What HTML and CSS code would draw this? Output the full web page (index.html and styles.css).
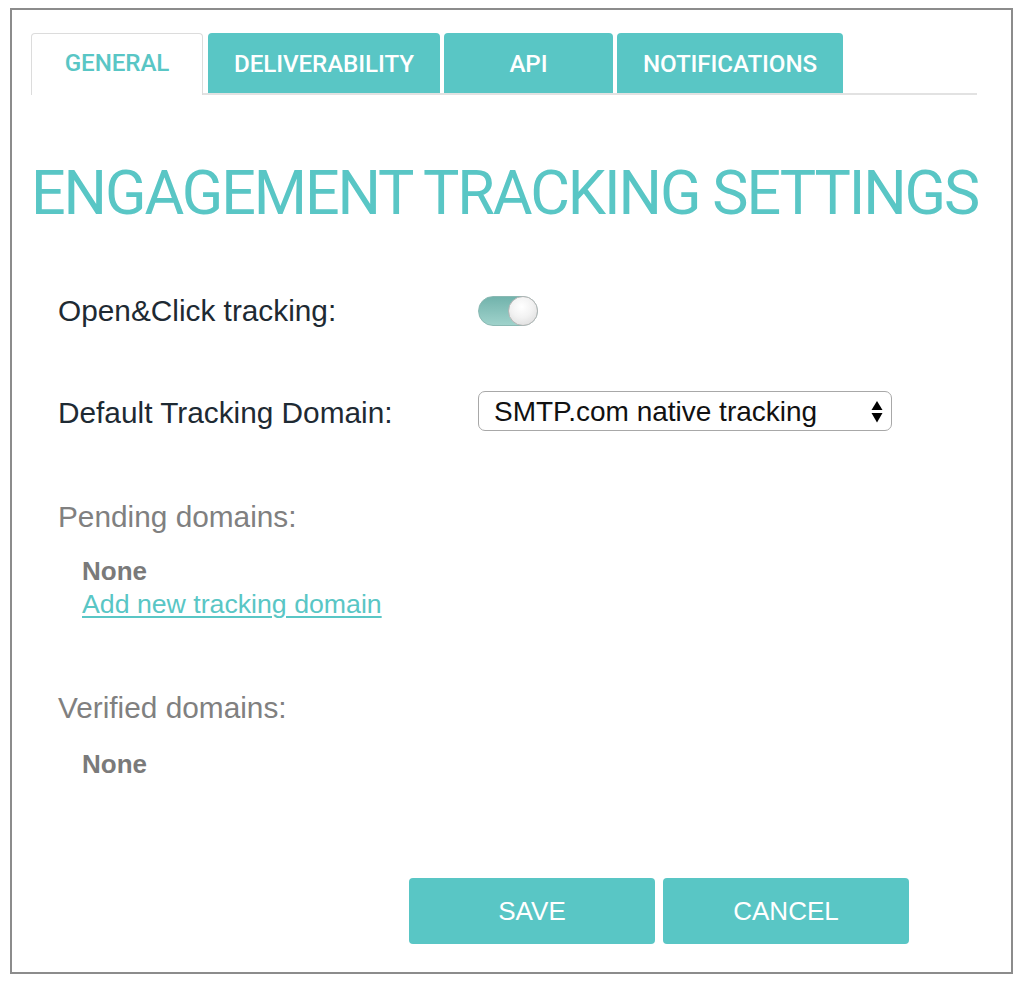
FILE: index.html
```html
<!DOCTYPE html>
<html lang="en">
<head>
<meta charset="utf-8">
<title>Engagement Tracking Settings</title>
<link rel="stylesheet" href="styles.css">
</head>
<body>
<div class="panel">
  <nav class="tabs">
    <a class="tab tab-active" href="#">GENERAL</a>
    <a class="tab" href="#">DELIVERABILITY</a>
    <a class="tab" href="#">API</a>
    <a class="tab" href="#">NOTIFICATIONS</a>
  </nav>

  <h1 class="title">ENGAGEMENT TRACKING SETTINGS</h1>

  <div class="form">
    <div class="row row-toggle">
      <span class="label">Open&amp;Click tracking:</span>
      <span class="toggle"><span class="knob"></span></span>
    </div>
    <div class="row row-select">
      <span class="label">Default Tracking Domain:</span>
      <div class="select-wrap">
        <select class="select">
          <option>SMTP.com native tracking</option>
        </select>
        <svg class="select-arrows" width="12" height="23" viewBox="0 0 12 23">
          <polygon points="6,0 11.5,9 0.5,9" fill="#000"/>
          <polygon points="0.5,12 11.5,12 6,21.5" fill="#000"/>
        </svg>
      </div>
    </div>

    <div class="group group-pending">
      <div class="group-label">Pending domains:</div>
      <div class="group-body">
        <div class="none">None</div>
        <a class="add-link" href="#">Add new tracking domain</a>
      </div>
    </div>

    <div class="group group-verified">
      <div class="group-label">Verified domains:</div>
      <div class="group-body">
        <div class="none none-verified">None</div>
      </div>
    </div>
  </div>

  <div class="actions">
    <button class="btn" type="button">SAVE</button>
    <button class="btn" type="button">CANCEL</button>
  </div>
</div>
</body>
</html>
```

FILE: styles.css
```css
html, body {
  margin: 0;
  padding: 0;
  background: #ffffff;
}

body {
  font-family: "Liberation Sans", Arial, Helvetica, sans-serif;
}

.panel {
  box-sizing: border-box;
  margin: 8px 0 0 10px;
  width: 1003px;
  height: 966px;
  border: 2px solid #8c8c8c;
  padding: 23px 0 0 19px;
  display: flex;
  flex-direction: column;
}

/* Tabs */
.tabs {
  display: flex;
  gap: 4px;
  width: 946px;
  height: 60px;
  border-bottom: 2px solid #e2e2e2;
}

.tab {
  box-sizing: border-box;
  min-width: 169px;
  height: 60px;
  padding: 1px 26px 0;
  display: flex;
  align-items: center;
  justify-content: center;
  background: #59c6c5;
  color: #ffffff;
  font-family: Roboto, "Liberation Sans", sans-serif;
  font-weight: 500;
  font-size: 24.2px;
  letter-spacing: -0.1px;
  text-decoration: none;
  border-radius: 4px 4px 0 0;
}

.tab-active {
  min-width: 172px;
  margin-right: 1px;
  background: #ffffff;
  color: #59c6c5;
  border: 1px solid #dcdcdc;
  border-bottom: none;
  height: 62px;
  margin-bottom: -2px;
  padding: 0 26px 3px;
}

/* Title */
.title {
  margin: 67px 0 0 0;
  font-family: Roboto, "Liberation Sans", sans-serif;
  font-weight: 400;
  font-size: 61px;
  line-height: 62px;
  color: #59c6c5;
  letter-spacing: -2.1px;
  white-space: nowrap;
}

/* Form */
.form {
  display: flex;
  flex-direction: column;
  padding-left: 27px;
}

.row {
  display: flex;
  align-items: center;
}

.row-toggle {
  margin-top: 71px;
  height: 32px;
}

.row-select {
  margin-top: 64px;
  height: 40px;
}

.label {
  width: 420px;
  font-size: 29.8px;
  line-height: 32px;
  color: #1e2a33;
}

.row-select .label {
  margin-top: 4px;
}

.toggle {
  box-sizing: border-box;
  position: relative;
  width: 60px;
  height: 30px;
  border-radius: 15px;
  background: linear-gradient(#72b3ac, #9fd2cb);
  border: 1px solid #8ab9b3;
}

.knob {
  position: absolute;
  right: -1px;
  top: -1px;
  box-sizing: border-box;
  width: 30px;
  height: 30px;
  border-radius: 50%;
  background: radial-gradient(circle at 45% 35%, #ffffff 0%, #f2f2f2 45%, #d6d6d6 100%);
  border: 1px solid #b5b5b5;
}

.select-wrap {
  position: relative;
  width: 414px;
  height: 40px;
}

.select {
  box-sizing: border-box;
  width: 414px;
  height: 40px;
  -webkit-appearance: none;
  appearance: none;
  border: 1px solid #a8a8a8;
  border-radius: 7px;
  background: #ffffff;
  padding: 0 0 0 15px;
  font-family: "Liberation Sans", Arial, sans-serif;
  font-size: 28px;
  color: #111111;
}

.select-arrows {
  position: absolute;
  right: 9px;
  top: 10px;
  pointer-events: none;
}

.group-pending {
  margin-top: 70px;
}

.group-verified {
  margin-top: 73px;
}

.group-label {
  font-size: 29.8px;
  line-height: 32px;
  color: #808080;
}

.group-body {
  padding-left: 24px;
}

.none {
  margin-top: 24px;
  font-weight: 700;
  font-size: 26px;
  line-height: 28px;
  color: #7a7a7a;
}

.none-verified {
  margin-top: 26px;
}

.add-link {
  display: inline-block;
  margin-top: 4px;
  font-size: 26.7px;
  line-height: 30px;
  color: #59c6c5;
  text-decoration: underline;
  text-decoration-thickness: 2px;
  text-underline-offset: 3px;
}

/* Actions */
.actions {
  display: flex;
  gap: 8px;
  margin-top: 100px;
  padding-left: 378px;
}

.btn {
  box-sizing: border-box;
  width: 246px;
  height: 66px;
  border: none;
  border-radius: 4px;
  background: #59c6c5;
  color: #ffffff;
  font-family: "Liberation Sans", Arial, sans-serif;
  font-size: 26px;
  padding: 0;
}
```
